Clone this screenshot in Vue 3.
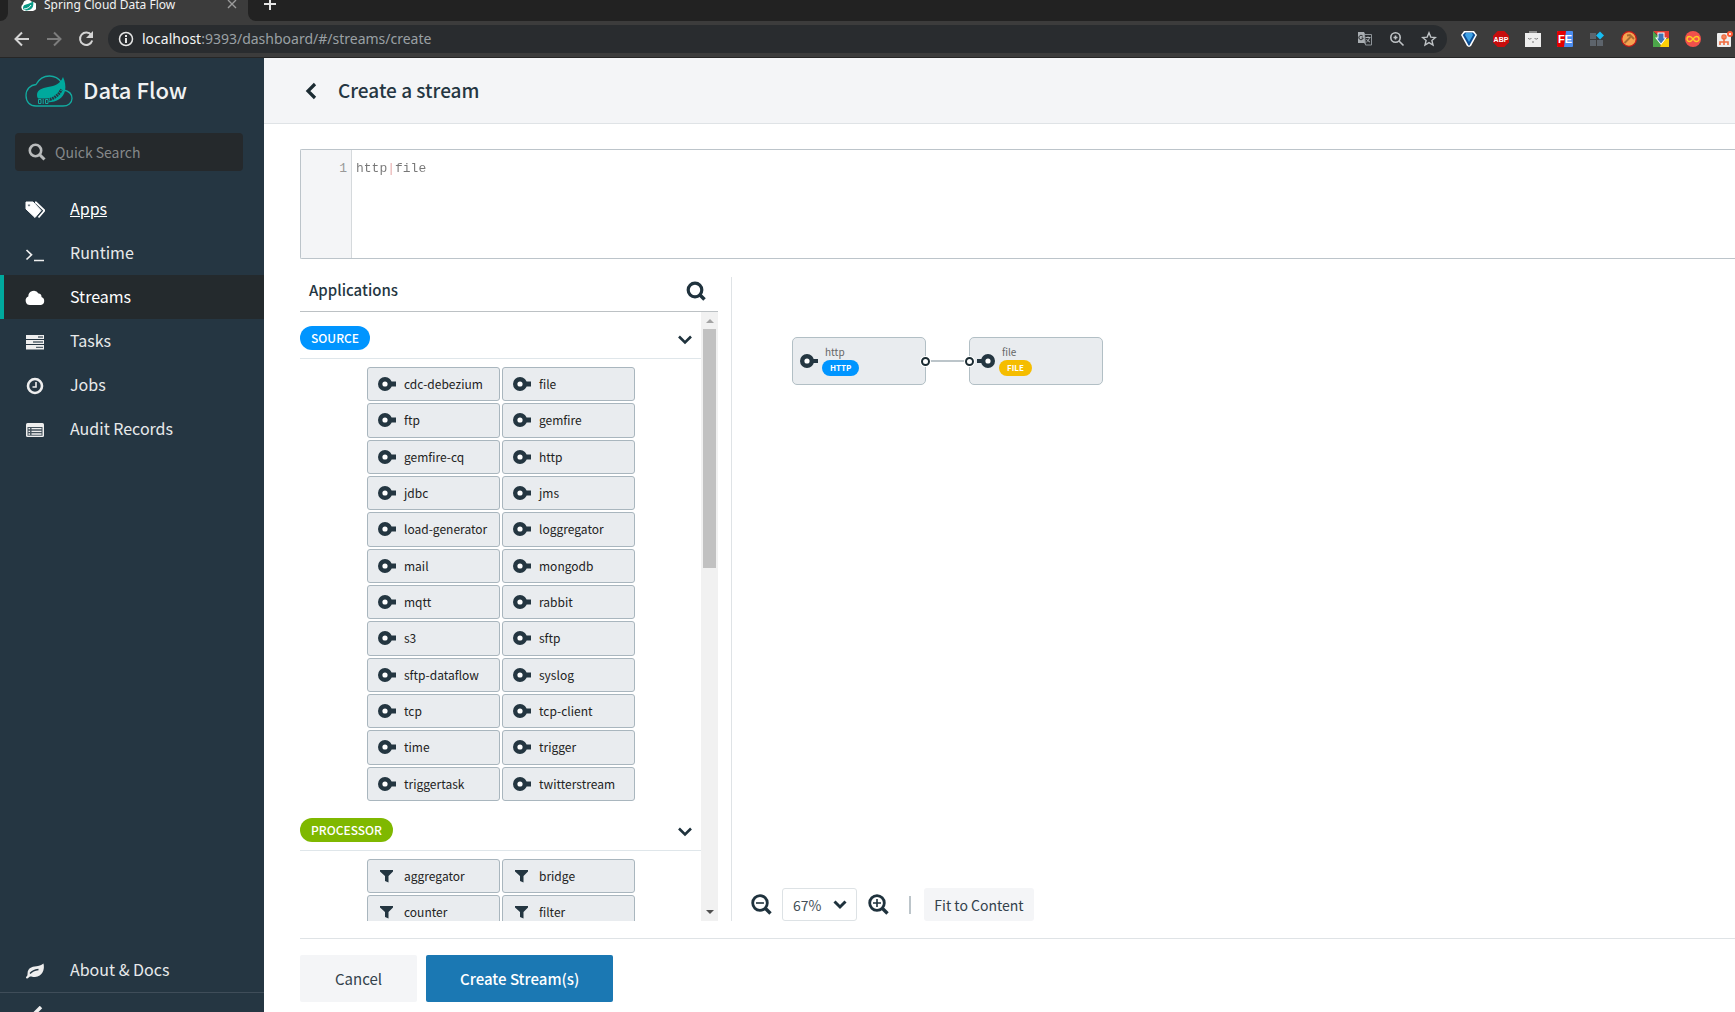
<script setup>
import { ref } from 'vue'

const dsl = ref('http|file')
const zoom = ref('67%')
const search = ref('')

const NAV = [
  { id: 'apps', label: 'Apps' },
  { id: 'runtime', label: 'Runtime' },
  { id: 'streams', label: 'Streams' },
  { id: 'tasks', label: 'Tasks' },
  { id: 'jobs', label: 'Jobs' },
  { id: 'audit', label: 'Audit Records' },
]

const GROUPS = [
  {
    type: 'source',
    apps: [
      'cdc-debezium', 'file', 'ftp', 'gemfire', 'gemfire-cq', 'http',
      'jdbc', 'jms', 'load-generator', 'loggregator', 'mail', 'mongodb',
      'mqtt', 'rabbit', 's3', 'sftp', 'sftp-dataflow', 'syslog',
      'tcp', 'tcp-client', 'time', 'trigger', 'triggertask', 'twitterstream',
    ],
  },
  {
    type: 'processor',
    apps: ['aggregator', 'bridge', 'counter', 'filter'],
  },
]
</script>

<template>
  <div class="window">
    <header class="browser">
      <div class="tabs">
        <div class="strip-left"></div>
        <div class="tab">
          <svg class="favicon" width="16" height="16" viewBox="0 0 16 16">
            <path d="M4 15a4 4 0 0 1-1-7 5 5 0 0 1 9-2 4 4 0 0 1 1 9z" fill="#fff" />
            <path d="M3 12c0-5 7-3 10-7 1 4 0 8-4 9-3 1-6 0-6-2z" fill="#0a9a86" />
            <path d="M4 13c3 0 6-2 7-4" stroke="#fff" fill="none" />
          </svg>
          <span class="tab-title">Spring Cloud Data Flow</span>
          <button class="plain" aria-label="Close tab">
            <svg width="10" height="10" viewBox="0 0 10 10"><path d="M1 1l8 8M9 1L1 9" stroke="#9b9b9b" stroke-width="1.4" /></svg>
          </button>
        </div>
        <div class="strip-right">
          <button class="plain" aria-label="New tab">
            <svg width="12" height="12" viewBox="0 0 12 12"><path d="M6 0v12M0 6h12" stroke="#e4e4e4" stroke-width="2" /></svg>
          </button>
        </div>
      </div>
      <div class="toolbar">
        <div class="history">
          <button class="plain" aria-label="Back">
            <svg width="16" height="16" viewBox="0 0 16 16"><path d="M15 8H2M8 1.5L1.5 8 8 14.500" fill="none" stroke="#d4d4d4" stroke-width="2" /></svg>
          </button>
          <button class="plain" aria-label="Forward">
            <svg width="16" height="16" viewBox="0 0 16 16"><path d="M1 8h13M8 1.500L14.500 8 8 14.500" fill="none" stroke="#7d7d7d" stroke-width="2" /></svg>
          </button>
          <button class="plain" aria-label="Reload">
            <svg width="16" height="16" viewBox="0 0 16 16">
              <path d="M13.300 4.200A6.200 6.200 0 1 0 14.200 9.500" fill="none" stroke="#d4d4d4" stroke-width="2" />
              <path d="M15 0v7H8z" fill="#d4d4d4" />
            </svg>
          </button>
        </div>
        <div class="omnibox">
          <svg width="16" height="16" viewBox="0 0 16 16">
            <circle cx="8" cy="8" r="6.500" fill="none" stroke="#e6e6e6" stroke-width="1.500" />
            <path d="M7 7h2v5H7zM7 4h2v2H7z" fill="#e6e6e6" />
          </svg>
          <div class="url"><b>localhost</b>:9393/dashboard/#/streams/create</div>
          <svg width="16" height="16" viewBox="0 0 16 16">
            <path d="M1 1h6l1 2v10l-1-1H1z" fill="#a9aeb2" />
            <path d="M7.500 3.500h7v10.500H8.500z" fill="none" stroke="#8e9499" />
            <path d="M5.800 5.200a2.200 2.200 0 1 0 .4 1.800H4.500" stroke="#292c2f" fill="none" />
            <path d="M8.500 6.500h5M11 5.500v1M12.500 6.500c-.5 2-1.500 3.500-3 4.500M9.500 8c1 1.500 2 2.500 3.500 3" stroke="#aeb3b7" fill="none" />
          </svg>
          <svg width="16" height="16" viewBox="0 0 16 16">
            <circle cx="6.500" cy="6.500" r="4.700" fill="none" stroke="#bfc3c6" stroke-width="1.600" />
            <path d="M10 10l4.500 4.500M4.500 6.500h4M6.500 4.500v4" stroke="#bfc3c6" stroke-width="1.600" />
          </svg>
          <svg width="16" height="16" viewBox="0 0 16 16">
            <path d="M8 1.800l1.800 4.300 4.600.4-3.500 3 1.100 4.500L8 11.600 4 14l1.100-4.500-3.500-3 4.600-.4z" fill="none" stroke="#bfc3c6" stroke-width="1.400" />
          </svg>
        </div>
        <div class="extensions">
          <svg width="16" height="16" viewBox="0 0 16 16">
            <path d="M3 0h10l3 4-6 11-2 1-2-1L0 4z" fill="#fff" />
            <path d="M4 1.500h8L14.300 4 9 13.500 8 15l-1-1.500L1.700 4z" fill="#0d4f96" />
            <path d="M5 2h6l1 2-4 7-4-7z" fill="#3fa2e6" />
          </svg>
          <svg width="16" height="16" viewBox="0 0 16 16">
            <path d="M4.700 0h6.600L16 4.700v6.600L11.300 16H4.700L0 11.300V4.700z" fill="#c70d0d" />
            <text x="8" y="10.500" class="glyph-abp">ABP</text>
          </svg>
          <svg width="16" height="16" viewBox="0 0 16 16">
            <path d="M4 0h8v2H4z" fill="#8c8c8c" />
            <path d="M0 2h16v14H0z" fill="#eee" />
            <path d="M3 7c1 1.500 2.500 1.500 3.500 0M9.500 7c1 1.500 2.500 1.500 3.500 0M7 11h2" stroke="#777" fill="none" />
          </svg>
          <svg width="16" height="16" viewBox="0 0 16 16">
            <rect width="16" height="16" rx="1" fill="#4a8df0" />
            <path d="M1 0h8L7 16H1a1 1 0 0 1-1-1V1a1 1 0 0 1 1-1z" fill="#e50000" />
            <text x="8" y="12" class="glyph-fe">FE</text>
          </svg>
          <svg width="16" height="16" viewBox="0 0 16 16">
            <path d="M1 2h6v6H1zM1 9h6v6H1zM8 9h6v6H8z" fill="#5d646c" />
            <path d="M11 .500l4 4-4 4-4-4z" fill="#17bdf2" />
          </svg>
          <svg width="16" height="16" viewBox="0 0 16 16">
            <circle cx="8" cy="8" r="7.300" fill="#f5a351" stroke="#c81818" stroke-width="1.300" />
            <path d="M3.500 12l6-6M6 4.500l3-.5 4 4" stroke="#a86b33" stroke-width="1.800" fill="none" />
          </svg>
          <svg width="16" height="16" viewBox="0 0 16 16">
            <path d="M0 0h16v7H8z" fill="#e33d33" />
            <path d="M0 0l8 9-1 7H0z" fill="#4ca64a" />
            <path d="M16 7v9H7l2-7z" fill="#fdd108" />
            <path d="M4.500 1.500h7v5H14l-6 7.500-6-7.500h2.500z" fill="#fff" />
            <path d="M5.500 2.500h5V7.500H12l-4 5-4-5h1.500z" fill="#3d75b5" />
          </svg>
          <svg width="16" height="16" viewBox="0 0 16 16">
            <circle cx="8" cy="8" r="8" fill="#f2504c" />
            <path d="M8 8c-1.500-2-2.500-2.500-3.500-2.500a2.500 2.500 0 0 0 0 5C5.500 10.500 6.500 10 8 8s2.500-2.500 3.500-2.500a2.500 2.500 0 0 1 0 5C10.500 10.500 9.500 10 8 8z" fill="none" stroke="#ffca28" stroke-width="1.400" />
          </svg>
          <svg width="16" height="16" viewBox="0 0 16 16">
            <rect y="2" width="14" height="14" rx="1" fill="#eee" />
            <path d="M7 5v6M3 14v-3h8v3M7 11v3" stroke="#f06b3f" stroke-width="1.600" fill="none" />
            <circle cx="7" cy="6" r="2" fill="none" stroke="#f06b3f" stroke-width="1.500" />
            <circle cx="13" cy="3" r="3" fill="#ff5a36" />
            <circle cx="13" cy="3" r="1" fill="#fff" />
          </svg>
        </div>
      </div>
    </header>

    <div class="app">
      <aside class="sidebar">
        <div class="brand">
          <svg width="48" height="32" viewBox="0 0 48 32">
            <path d="M11 31C5 31 1 27 1 20.500S5.500 10 11 9.500C14 4 19 1 24.500 1c5 0 9 2 12 6.500M38.500 15C44 16 47 19 47 23.500S43 31 38 31H11" fill="none" stroke="#12aba0" stroke-width="1.300" />
            <path d="M38 2c2 4 3 9 2 14-2 8-10 12-19 11-6-.5-9-3-9-7 0-5 5-7 11-8 7-1 12-3 15-10z" fill="#00a99d" />
            <path d="M20 25.500c7-.8 13-4 16.500-11" fill="none" stroke="#253642" stroke-width="3" stroke-dasharray="1.800 .7" />
            <path d="M12.500 23.500h11v6h-11z" fill="#253642" />
            <path d="M13.500 24.500h2.500v4h-2.500zM18.200 24v5M20.500 24.500H23v4h-2.500z" fill="none" stroke="#12aba0" />
          </svg>
          <span>Data Flow</span>
        </div>
        <label class="quick">
          <svg width="18" height="18" viewBox="0 0 18 18">
            <circle cx="7.500" cy="7.500" r="5.700" fill="none" stroke="#b9bbbc" stroke-width="2.600" />
            <path d="M11.500 11.500l5 5" stroke="#b9bbbc" stroke-width="3" />
          </svg>
          <input v-model="search" type="text" placeholder="Quick Search" aria-label="Quick Search" />
        </label>
        <nav>
          <a
            v-for="item in NAV"
            :key="item.id"
            href="#"
            class="nav-item"
            :class="{ active: item.id === 'streams', hovered: item.id === 'apps' }"
          >
            <svg width="20" height="18" viewBox="0 0 20 18">
              <g v-if="item.id === 'apps'">
                <path fill-rule="evenodd" d="M1 1h7l8 8.500-6 7L1 8zM4 3a1.200 1.200 0 1 0 .01 0z" fill="#fff" stroke="#fff" stroke-linejoin="round" />
                <path d="M10 1.500h1l8.500 8-6 7" fill="none" stroke="#fff" stroke-width="1.800" />
              </g>
              <path v-else-if="item.id === 'runtime'" d="M1.500 5l5 4.800-5 4.700M9 15.500h10" fill="none" stroke="#eee" stroke-width="1.700" />
              <path v-else-if="item.id === 'streams'" d="M5 16a4.500 4.500 0 0 1-1.700-8.600A5.500 5.500 0 0 1 13.500 4.500a3 3 0 0 1 3 3.500A4.200 4.200 0 0 1 16 16z" fill="#fff" />
              <g v-else-if="item.id === 'tasks'">
                <path d="M1 2h18v4H1zM1 7h18v4H1zM1 12h18v4.500H1z" fill="#eee" />
                <path d="M13 4h5M8 9h10M11 14.300h7" stroke="#56636c" stroke-width="1.300" />
              </g>
              <g v-else-if="item.id === 'jobs'">
                <circle cx="10" cy="9" r="7" fill="none" stroke="#eee" stroke-width="2.600" />
                <path d="M11 5v5H7.500" fill="none" stroke="#eee" stroke-width="1.600" />
              </g>
              <g v-else>
                <rect x="1" y="2" width="18" height="14" rx="1.500" fill="#eee" />
                <path d="M2.500 6h15v8.700h-15z" fill="#44525c" />
                <path d="M3.500 7.700h1.600M6.500 7.700h10M3.500 10.300h1.600M6.500 10.300h10M3.500 13h1.600M6.500 13h10" stroke="#eee" stroke-width="1.300" />
              </g>
            </svg>
            <span>{{ item.label }}</span>
          </a>
        </nav>
        <div class="sidebar-foot">
          <a href="#" class="nav-item">
            <svg width="20" height="18" viewBox="0 0 20 18">
              <path d="M18.500 1.500c1.500 6-1 13-8.500 13.500-2.500.2-3.500-.8-5-.5-1 .3-1.500 2-3 2-1 0-1.500-1-.5-2 .8-.8 1-1 1-2.500C2.500 4.500 9 4.500 13 4c2.500-.3 4-1.500 5.500-2.500z" fill="#eee" />
              <path d="M5 11.500C7.500 8.500 10 8 13.500 7.500" fill="none" stroke="#253642" stroke-width="1.300" />
            </svg>
            <span>About &amp; Docs</span>
          </a>
          <button class="plain collapse" aria-label="Collapse">
            <svg width="12" height="18" viewBox="0 0 12 18"><path d="M10 1L2 9l8 8" fill="none" stroke="#eee" stroke-width="3.500" /></svg>
          </button>
        </div>
      </aside>

      <main class="main">
        <div class="page-head">
          <button class="plain" aria-label="Back to streams">
            <svg width="12" height="18" viewBox="0 0 12 18"><path d="M10 2L3 9l7 7" fill="none" stroke="#1b2b32" stroke-width="3.200" /></svg>
          </button>
          <h1>Create a stream</h1>
        </div>

        <div class="content">
          <div class="editor">
            <div class="gutter">1</div>
            <textarea v-model="dsl" class="code" spellcheck="false" aria-label="Stream definition"></textarea>
          </div>

          <div class="designer">
            <section class="palette">
              <div class="palette-head">
                <h2>Applications</h2>
                <button class="plain" aria-label="Search applications">
                  <svg width="20" height="20" viewBox="0 0 20 20">
                    <circle cx="9" cy="9" r="6.800" fill="none" stroke="#1f323d" stroke-width="3.200" />
                    <path d="M13.500 13.500l5 5" stroke="#1f323d" stroke-width="3.500" />
                  </svg>
                </button>
              </div>
              <div class="palette-body">
                <div class="groups">
                  <div v-for="group in GROUPS" :key="group.type" class="group">
                    <div class="group-head">
                      <span class="badge" :class="group.type">{{ group.type }}</span>
                      <button class="plain toggle" :aria-label="`Toggle ${group.type}`">
                        <svg width="14" height="10" viewBox="0 0 14 10"><path d="M1 1.500l6 6 6-6" fill="none" stroke="#1f323d" stroke-width="2.600" /></svg>
                      </button>
                    </div>
                    <div class="apps" :class="group.type">
                      <div v-for="name in group.apps" :key="name" class="app-card">
                        <svg v-if="group.type === 'source'" width="18" height="14" viewBox="0 0 18 14">
                          <circle cx="7" cy="7" r="4.800" fill="#fff" stroke="#243641" stroke-width="4.400" />
                          <path d="M12 4.500h6v5h-6z" fill="#243641" />
                        </svg>
                        <svg v-else width="18" height="14" viewBox="0 0 18 14">
                          <path d="M2 1h13v1.500L10.500 7v6.500L7 12V7L2 2.500z" fill="#243641" />
                        </svg>
                        <span>{{ name }}</span>
                      </div>
                    </div>
                  </div>
                </div>
                <div class="scrollbar">
                  <svg width="17" height="17" viewBox="0 0 17 17"><path d="M5 11l4-4 4 4z" fill="#a3a3a3" /></svg>
                  <div class="thumb"></div>
                  <svg width="17" height="17" viewBox="0 0 17 17"><path d="M5 6h8l-4 4z" fill="#505050" /></svg>
                </div>
              </div>
            </section>

            <section class="canvas">
              <div class="link"></div>
              <div class="node node-http">
                <svg width="18" height="14" viewBox="0 0 18 14">
                  <circle cx="7" cy="7" r="4.800" fill="#fff" stroke="#243641" stroke-width="4.400" />
                  <path d="M12 5h6v4h-6z" fill="#243641" />
                </svg>
                <div class="node-text">
                  <span class="node-name">http</span>
                  <span class="node-badge source">HTTP</span>
                </div>
                <i class="port out"></i>
              </div>
              <div class="node node-file">
                <svg width="18" height="14" viewBox="0 0 18 14">
                  <circle cx="11" cy="7" r="4.800" fill="#fff" stroke="#243641" stroke-width="4.400" />
                  <path d="M0 5h6v4H0z" fill="#243641" />
                </svg>
                <div class="node-text">
                  <span class="node-name">file</span>
                  <span class="node-badge sink">FILE</span>
                </div>
                <i class="port in"></i>
              </div>

              <div class="zoom-bar">
                <button class="plain" aria-label="Zoom out">
                  <svg width="21" height="21" viewBox="0 0 21 21">
                    <circle cx="9" cy="9" r="7.300" fill="none" stroke="#1f323d" stroke-width="2.800" />
                    <path d="M14 14l5.500 5.500" stroke="#1f323d" stroke-width="3.400" />
                    <path d="M5 9h8" stroke="#1f323d" stroke-width="1.600" />
                  </svg>
                </button>
                <div class="select-wrap">
                  <select v-model="zoom" aria-label="Zoom level">
                    <option>67%</option>
                    <option>100%</option>
                  </select>
                  <svg width="14" height="10" viewBox="0 0 14 10"><path d="M1.500 1.500L7 7l5.500-5.500" fill="none" stroke="#1f323d" stroke-width="3" /></svg>
                </div>
                <button class="plain" aria-label="Zoom in">
                  <svg width="21" height="21" viewBox="0 0 21 21">
                    <circle cx="9" cy="9" r="7.300" fill="none" stroke="#1f323d" stroke-width="2.800" />
                    <path d="M14 14l5.500 5.500" stroke="#1f323d" stroke-width="3.400" />
                    <path d="M5 9h8M9 5v8" stroke="#1f323d" stroke-width="1.600" />
                  </svg>
                </button>
                <div class="bar-sep"></div>
                <button class="fit">Fit to Content</button>
              </div>
            </section>
          </div>

          <div class="actions">
            <button class="btn">Cancel</button>
            <button class="btn primary">Create Stream(s)</button>
          </div>
        </div>
      </main>
    </div>
  </div>
</template>

<style>
body {
  margin: 0;
  overflow: hidden;
}
</style>

<style scoped>
.window {
  display: flex;
  flex-direction: column;
  height: 100vh;
  overflow: hidden;
  background: #fff;
  color: #253642;
  font-family: "Noto Sans CJK SC", "Source Sans Pro", sans-serif;
  font-size: 14px;
}

svg {
  display: block;
  flex-shrink: 0;
}

button,
input,
select,
textarea {
  font-family: inherit;
  margin: 0;
}

.plain {
  padding: 0;
  border: 0;
  background: none;
}

/* Browser chrome */
.browser {
  background: #3c3c3c;
  border-bottom: 1px solid #262626;
  font-family: "Noto Sans", "Open Sans", sans-serif;
  flex-shrink: 0;
}

.tabs {
  display: flex;
  align-items: flex-end;
  height: 21px;
  overflow: hidden;
}

.strip-left {
  width: 8px;
  height: 34px;
  background: #222;
  border-bottom-right-radius: 8px;
}

.tab {
  box-sizing: border-box;
  display: flex;
  align-items: center;
  width: 240px;
  height: 34px;
  padding: 0 11px 0 12px;
  gap: 8px;
}

.tab-title {
  flex: 1;
  padding-top: 2px;
  color: #f2f2f2;
  font-size: 12px;
  line-height: 12px;
  white-space: nowrap;
}

.strip-right {
  display: flex;
  align-items: center;
  flex: 1;
  height: 34px;
  padding-left: 16px;
  background: #222;
  border-bottom-left-radius: 8px;
}

.toolbar {
  display: flex;
  align-items: center;
  height: 36px;
  padding: 0 2px 0 14px;
}

.history {
  display: flex;
  gap: 16px;
  width: 94px;
}

.omnibox {
  display: flex;
  align-items: center;
  flex: 1;
  gap: 16px;
  height: 28px;
  padding: 0 10px;
  border-radius: 14px;
  background: #292c2f;
}

.url {
  flex: 1;
  margin-left: -8px;
  color: #9aa0a4;
  font-size: 14px;
  line-height: 20px;
}

.url b {
  color: #f4f4f4;
  font-weight: 400;
}

.extensions {
  display: flex;
  gap: 16px;
  margin-left: 14px;
}

.glyph-abp,
.glyph-fe {
  fill: #fff;
  font-family: "Liberation Sans", sans-serif;
  font-size: 7px;
  font-weight: 700;
  text-anchor: middle;
}

.glyph-fe {
  font-size: 11px;
}

/* Sidebar */
.app {
  display: flex;
  flex: 1;
  min-height: 0;
}

.sidebar {
  display: flex;
  flex-direction: column;
  width: 264px;
  flex-shrink: 0;
  overflow: hidden;
  background: #253642;
  color: #e8eaeb;
}

.brand {
  display: flex;
  align-items: center;
  gap: 10px;
  height: 66px;
  padding-left: 25px;
  color: #f1f2f2;
  font-size: 22px;
  font-weight: 500;
}

.brand span {
  padding-bottom: 4px;
}

.quick {
  display: flex;
  align-items: center;
  gap: 9px;
  height: 38px;
  margin: 9px 21px 16px 15px;
  padding-left: 13px;
  border-radius: 4px;
  background: #25292c;
}

.quick input {
  flex: 1;
  min-width: 0;
  padding: 0;
  border: 0;
  background: none;
  color: #ddd;
  font-size: 14px;
}

.quick input::placeholder {
  color: #85888a;
  opacity: 1;
}

.nav-item {
  box-sizing: border-box;
  display: flex;
  align-items: center;
  gap: 25px;
  height: 44px;
  padding-left: 25px;
  color: #e8eaeb;
  font-size: 16px;
  text-decoration: none;
}

.nav-item span {
  padding-bottom: 2px;
}

.nav-item svg {
  padding-top: 2px;
}

.nav-item.hovered {
  color: #fff;
  text-decoration: underline;
}

.nav-item.active {
  padding-left: 21px;
  border-left: 4px solid #00a99d;
  background: #242a2d;
  color: #fff;
}

.sidebar-foot {
  height: 64px;
  margin-top: auto;
}

.collapse {
  display: block;
  width: 100%;
  padding: 13px 0 0 31px;
  border-top: 1px solid #3f4d59;
}

/* Page */
.main {
  display: flex;
  flex-direction: column;
  flex: 1;
  min-width: 0;
}

.page-head {
  display: flex;
  align-items: center;
  gap: 21px;
  height: 65px;
  padding-left: 41px;
  border-bottom: 1px solid #dfe3e6;
  background: #f4f5f7;
}

h1,
h2 {
  margin: 0;
  font-weight: 500;
}

h1 {
  padding-bottom: 2px;
  font-size: 19px;
}

.content {
  display: flex;
  flex-direction: column;
  flex: 1;
  min-height: 0;
  padding: 25px 0 10px 36px;
}

.editor {
  display: flex;
  height: 108px;
  border: 1px solid #bcc4ca;
  border-right: 0;
  border-radius: 2px 0 0 2px;
}

.gutter,
.code {
  font-family: "Liberation Mono", monospace;
  font-size: 13px;
  line-height: 18px;
}

.gutter {
  box-sizing: border-box;
  width: 51px;
  padding: 10px 4px 0 0;
  border-right: 1px solid #d5d9dc;
  background: #f4f5f7;
  color: #999;
  text-align: right;
}

/* The pipe between the two apps is tinted, the names stay grey */
.code {
  flex: 1;
  padding: 10px 4px;
  border: 0;
  outline: 0;
  resize: none;
  color: transparent;
  background-image: linear-gradient(to right, #777 4ch, #e5a5a5 4ch 5ch, #777 5ch);
  background-origin: content-box;
  background-clip: text;
}

.designer {
  display: flex;
  flex: 1;
  min-height: 0;
  margin: 18px 0 17px;
}

.palette {
  display: flex;
  flex-direction: column;
  width: 418px;
  padding-right: 13px;
  border-right: 1px solid #dfe3e6;
}

.palette-head {
  display: flex;
  align-items: center;
  justify-content: space-between;
  height: 28px;
  padding: 0 12px 6px 9px;
  border-bottom: 1px solid #bcc1c4;
}

h2 {
  padding-bottom: 4px;
  font-size: 15px;
}

.palette-body {
  display: flex;
  flex: 1;
  min-height: 0;
}

.groups {
  flex: 1;
  overflow: hidden;
}

.group-head {
  display: flex;
  align-items: center;
  justify-content: space-between;
  padding: 14px 9px 8px 0;
  border-bottom: 1px solid #dfe6ea;
}

.toggle {
  padding-top: 4px;
}

.badge {
  height: 24px;
  padding: 0 11px;
  border-radius: 12px;
  color: #fff;
  font-size: 12px;
  font-weight: 500;
  line-height: 24px;
  text-transform: uppercase;
}

.badge.source,
.node-badge.source {
  background: #0095ff;
}

.badge.processor {
  background: #7fb800;
}

.node-badge.sink {
  background: #f5bd00;
}

.apps {
  display: grid;
  grid-template-columns: 1fr 1fr;
  gap: 2px;
  width: 268px;
  margin: 8px 0 3px 67px;
}

.apps.source {
  grid-template-rows: repeat(12, 1fr);
  height: 434px;
}

.app-card {
  box-sizing: border-box;
  display: flex;
  align-items: center;
  gap: 8px;
  min-height: 34px;
  padding-left: 10px;
  border: 1px solid #a9b6be;
  border-radius: 3px;
  background: #e9ecef;
  color: #222;
  font-size: 12px;
  line-height: 18px;
}

.scrollbar {
  display: flex;
  flex-direction: column;
  width: 17px;
  background: #f1f1f1;
}

.thumb {
  height: 239px;
  margin: 0 2px auto;
  background: #c1c1c1;
}

/* Flow canvas */
.canvas {
  position: relative;
  display: flex;
  align-items: flex-end;
  flex: 1;
}

.link {
  position: absolute;
  top: 83px;
  left: 194px;
  width: 44px;
  height: 2px;
  background: #bcc5ca;
}

.node {
  position: absolute;
  top: 60px;
  box-sizing: border-box;
  display: flex;
  align-items: center;
  gap: 4px;
  width: 134px;
  height: 48px;
  padding-left: 7px;
  border: 1px solid #b2bfc5;
  border-radius: 5px;
  background: #e9ecef;
}

.node-http {
  left: 60px;
}

.node-file {
  left: 237px;
}

.node-text {
  display: flex;
  flex-direction: column;
  align-items: flex-start;
  gap: 2px;
}

.node-name {
  padding-left: 3px;
  color: #666;
  font-size: 10px;
  line-height: 12px;
}

.node-badge {
  padding: 0 8px;
  border-radius: 8px;
  color: #fff;
  font-size: 8px;
  font-weight: 700;
  line-height: 16px;
}

.port {
  position: absolute;
  top: 19px;
  box-sizing: border-box;
  width: 9px;
  height: 9px;
  border: 2px solid #1b2b32;
  border-radius: 50%;
  background: #fff;
  box-shadow: 0 0 0 1px #fff;
}

.port.out {
  right: -5px;
}

.port.in {
  left: -5px;
}

.zoom-bar {
  display: flex;
  align-items: center;
  height: 33px;
  padding-left: 19px;
}

.select-wrap {
  display: grid;
  align-items: center;
  width: 75px;
  margin: 0 11px 0 10px;
}

.select-wrap > * {
  grid-area: 1 / 1;
}

.select-wrap svg {
  justify-self: end;
  margin-right: 10px;
  pointer-events: none;
}

select {
  box-sizing: border-box;
  height: 33px;
  padding: 0 10px;
  border: 1px solid #dde2e5;
  border-radius: 3px;
  background: #fff;
  color: #444f57;
  font-size: 14px;
  appearance: none;
}

.bar-sep {
  width: 2px;
  height: 18px;
  margin: 0 13px 0 20px;
  background: #bcc5ca;
}

.fit {
  height: 33px;
  padding: 0;
  width: 110px;
  border: 0;
  border-radius: 3px;
  background: #f4f5f7;
  color: #33424c;
  font-size: 14px;
}

.actions {
  display: flex;
  gap: 9px;
  padding-top: 16px;
  border-top: 1px solid #dfe3e6;
}

.btn {
  height: 47px;
  padding: 0 35px;
  border: 0;
  border-radius: 2px;
  background: #f4f5f7;
  color: #33424c;
  font-size: 15px;
}

.btn.primary {
  padding: 0 34px;
  background: #1b78b3;
  color: #fff;
  font-weight: 500;
}
</style>
